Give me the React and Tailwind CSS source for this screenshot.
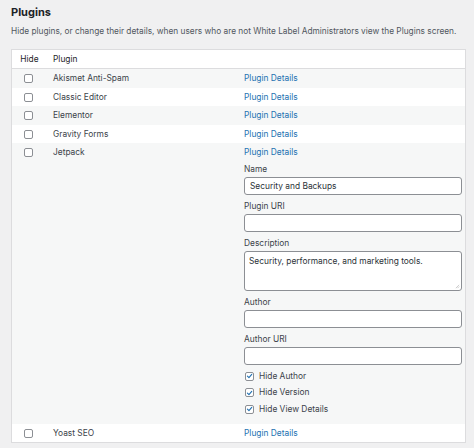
import React from "react";

const font = { fontFamily: "Inter, 'Open Sans', 'Liberation Sans', sans-serif" };

function Box({ checked }) {
  return (
    <span className="inline-flex items-center justify-center w-[9px] h-[9px] rounded-[2px] border border-[#8c8f94] bg-white shrink-0">
      {checked && (
        <svg viewBox="0 0 10 10" className="w-[8px] h-[8px]">
          <path d="M2 5.2 L4.2 7.3 L8.2 2.6" fill="none" stroke="#2271b1" strokeWidth="1.6" strokeLinecap="round" strokeLinejoin="round" />
        </svg>
      )}
    </span>
  );
}

function Row({ name, bg, children, link = true }) {
  return (
    <div className={`flex ${bg}`}>
      <div className="w-[33px] shrink-0 flex justify-center pt-[4.5px]">
        <div className="h-[10px] flex items-center"><Box /></div>
      </div>
      <div className="w-[191px] shrink-0 pl-[8px] text-[#3c434a] leading-[12px] pt-[3px] pb-[3.5px]">{name}</div>
      <div className="flex-1 pl-[8px] pr-[3px] pt-[3px] pb-[3.5px]">
        {link && <div className="text-[#2271b1] leading-[12px]">Plugin Details</div>}
        {children}
      </div>
    </div>
  );
}

function Field({ label, area }) {
  return (
    <div className="flex flex-col">
      <div className="leading-[12px] h-[12px] mb-[2px] text-[#3c434a]">{label}</div>
      {area ? (
        <div className="h-[40px] rounded-[3px] border border-[#8c8f94] bg-white px-[4px] pt-[3px] text-[#2c3338] leading-[12px] relative">
          {area}
          <svg viewBox="0 0 6 6" className="absolute right-[1px] bottom-[1px] w-[5px] h-[5px]">
            <path d="M5 1 L1 5 M5 3 L3 5" stroke="#aaa" strokeWidth="0.7" />
          </svg>
        </div>
      ) : (
        <div className="h-[18px] rounded-[3px] border border-[#8c8f94] bg-white px-[5px] flex items-center text-[#2c3338]">{label === "Name" ? "Security and Backups" : ""}</div>
      )}
    </div>
  );
}

export default function App() {
  return (
    <div style={font} className="w-[474px] h-[448px] bg-[#f0f0f1] text-[8.4px] overflow-hidden">
      <div className="pl-[11px] pt-[5px]">
        <div className="text-[11px] font-bold text-[#1d2327] leading-[14px]">Plugins</div>
        <div className="text-[#50575e] leading-[12px] mt-[6px] whitespace-nowrap text-[8.3px]">Hide plugins, or change their details, when users who are not White Label Administrators view the Plugins screen.</div>
      </div>
      <div className="ml-[11px] mt-[12px] w-[455px] border border-[#dcdcde] bg-white">
        <div className="flex h-[19px] items-center border-b border-[#dcdcde] text-[#1d2327]">
          <div className="w-[33px] shrink-0 text-center pl-[2px]">Hide</div>
          <div className="pl-[8px]">Plugin</div>
        </div>
        <Row name="Akismet Anti-Spam" bg="bg-[#f6f7f7]" />
        <Row name="Classic Editor" bg="bg-white" />
        <Row name="Elementor" bg="bg-[#f6f7f7]" />
        <Row name="Gravity Forms" bg="bg-white" />
        <Row name="Jetpack" bg="bg-[#f6f7f7]">
          <div className="flex flex-col gap-[5px] mt-[5px]">
            <Field label="Name" />
            <Field label="Plugin URI" />
            <Field label="Description" area="Security, performance, and marketing tools." />
            <Field label="Author" />
            <Field label="Author URI" />
          </div>
          <div className="mt-[3px] mb-[2.5px] flex flex-col">
            {["Hide Author", "Hide Version", "Hide View Details"].map((t) => (
              <div key={t} className="h-[16.5px] flex items-center gap-[5px] pl-[1px] text-[#3c434a]">
                <Box checked />
                <span>{t}</span>
              </div>
            ))}
          </div>
        </Row>
        <Row name="Yoast SEO" bg="bg-white" />
      </div>
    </div>
  );
}
